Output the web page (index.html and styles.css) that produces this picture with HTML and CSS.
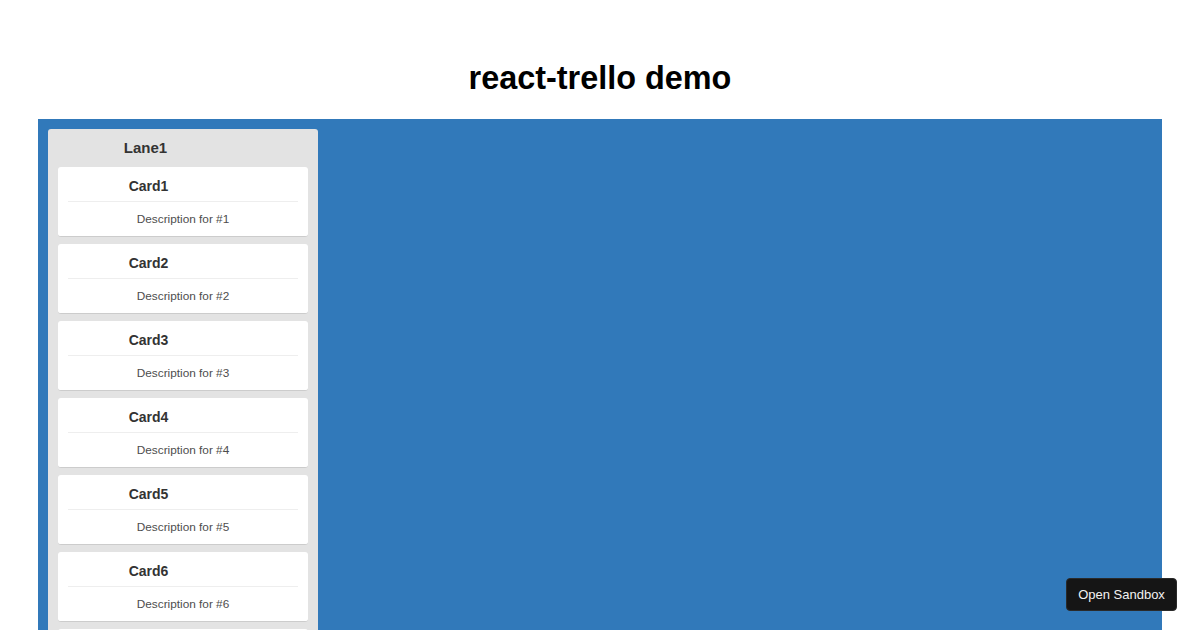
FILE: index.html
```html
<!DOCTYPE html>
<html>
<head>
<meta charset="utf-8">
<link rel="stylesheet" href="styles.css">
</head>
<body>
<div class="page">
  <header class="header"><h1 class="title">react-trello demo</h1></header>
  <section class="board">
    <div class="lane">
      <div class="lane-header"><span class="lane-title">Lane1</span></div>
      <div class="cards">
        <div class="card"><div class="card-header"><span class="card-title">Card1</span></div><div class="card-desc">Description for #1</div></div>
        <div class="card"><div class="card-header"><span class="card-title">Card2</span></div><div class="card-desc">Description for #2</div></div>
        <div class="card"><div class="card-header"><span class="card-title">Card3</span></div><div class="card-desc">Description for #3</div></div>
        <div class="card"><div class="card-header"><span class="card-title">Card4</span></div><div class="card-desc">Description for #4</div></div>
        <div class="card"><div class="card-header"><span class="card-title">Card5</span></div><div class="card-desc">Description for #5</div></div>
        <div class="card"><div class="card-header"><span class="card-title">Card6</span></div><div class="card-desc">Description for #6</div></div>
        <div class="card card-empty"></div>
      </div>
    </div>
  </section>
</div>
<a class="sandbox-btn">Open Sandbox</a>
</body>
</html>
```
FILE: styles.css
```css
html, body {
  margin: 0;
  padding: 0;
  height: 100%;
  overflow: hidden;
  background: #fff;
  font-family: "Liberation Sans", Arial, Helvetica, sans-serif;
}
.page {
  padding: 0 38px;
  height: 100%;
  display: flex;
  flex-direction: column;
}
.header {
  padding-top: 60px;
  height: 59px;
}
.title {
  margin: 0;
  text-align: center;
  font-size: 32.4px;
  line-height: 37px;
  font-weight: bold;
  color: #000;
}
.board {
  flex: 1;
  background: #3179ba;
  padding: 10px;
  display: flex;
  align-items: flex-start;
  overflow: hidden;
}
.lane {
  width: 250px;
  background: #e3e3e3;
  border-radius: 3px;
  padding: 0 10px;
}
.lane-header {
  display: flex;
  padding: 10px 0 10px;
}
.lane-title {
  width: 70%;
  text-align: center;
  font-size: 15px;
  line-height: 18px;
  font-weight: bold;
  color: #333;
}
.cards {
  display: flex;
  flex-direction: column;
  gap: 7px;
}
.card {
  background: #fff;
  border-radius: 3px;
  border-bottom: 1px solid #ccc;
  padding: 10px 10px 10px;
}
.card-empty {
  height: 49px;
}
.card-header {
  display: flex;
  padding-bottom: 6px;
  border-bottom: 1px solid #eee;
}
.card-title {
  width: 70%;
  text-align: center;
  font-size: 14px;
  line-height: 18px;
  font-weight: bold;
  color: #333;
}
.card-desc {
  margin-top: 9px;
  margin-bottom: -1px;
  text-align: center;
  font-size: 11.8px;
  line-height: 16px;
  color: #4d4d4d;
}
.sandbox-btn {
  position: fixed;
  right: 23px;
  bottom: 19px;
  width: 111px;
  height: 33px;
  box-sizing: border-box;
  display: flex;
  align-items: center;
  justify-content: center;
  background: #151515;
  border: 1px solid #2a2a2a;
  border-radius: 4px;
  color: #f2f2f2;
  font-size: 13px;
  font-family: "Liberation Sans", Arial, sans-serif;
}
```
